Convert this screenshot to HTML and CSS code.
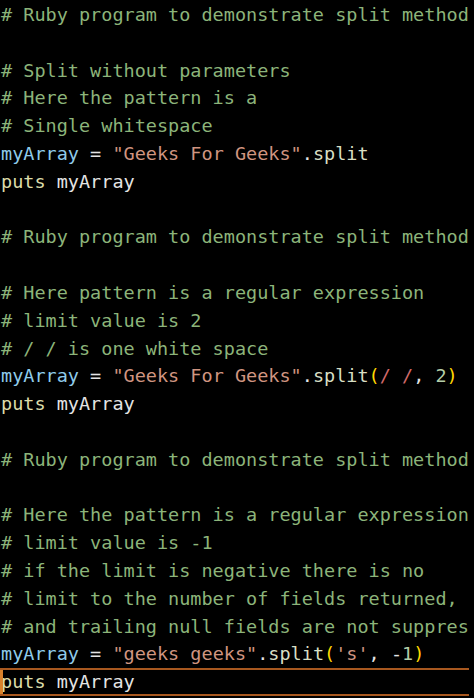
FILE: index.html
```html
<!DOCTYPE html>
<html>
<head>
<meta charset="utf-8">
<link rel="stylesheet" href="styles.css">
</head>
<body>
<div class="editor">
<div class="line"><span class="c"># Ruby program to demonstrate split method</span></div>
<div class="line"> </div>
<div class="line"><span class="c"># Split without parameters</span></div>
<div class="line"><span class="c"># Here the pattern is a</span></div>
<div class="line"><span class="c"># Single whitespace</span></div>
<div class="line"><span class="v">myArray</span><span class="p"> = </span><span class="s">"Geeks For Geeks"</span><span class="p">.</span><span class="f">split</span></div>
<div class="line"><span class="k">puts</span><span class="p"> myArray</span></div>
<div class="line"> </div>
<div class="line"><span class="c"># Ruby program to demonstrate split method</span></div>
<div class="line"> </div>
<div class="line"><span class="c"># Here pattern is a regular expression</span></div>
<div class="line"><span class="c"># limit value is 2</span></div>
<div class="line"><span class="c"># / / is one white space</span></div>
<div class="line"><span class="v">myArray</span><span class="p"> = </span><span class="s">"Geeks For Geeks"</span><span class="p">.</span><span class="f">split</span><span class="b">(</span><span class="r">/ /</span><span class="p">, </span><span class="n">2</span><span class="b">)</span></div>
<div class="line"><span class="k">puts</span><span class="p"> myArray</span></div>
<div class="line"> </div>
<div class="line"><span class="c"># Ruby program to demonstrate split method</span></div>
<div class="line"> </div>
<div class="line"><span class="c"># Here the pattern is a regular expression</span></div>
<div class="line"><span class="c"># limit value is -1</span></div>
<div class="line"><span class="c"># if the limit is negative there is no</span></div>
<div class="line"><span class="c"># limit to the number of fields returned,</span></div>
<div class="line"><span class="c"># and trailing null fields are not suppres</span></div>
<div class="line"><span class="v">myArray</span><span class="p"> = </span><span class="s">"geeks geeks"</span><span class="p">.</span><span class="f">split</span><span class="b">(</span><span class="s">'s'</span><span class="p">, </span><span class="p">-</span><span class="n">1</span><span class="b">)</span></div>
<div class="line current"><span class="cursor"></span><span class="k">puts</span><span class="p"> myArray</span></div>
</div>
</body>
</html>
```
FILE: styles.css
```css
html, body {
  margin: 0;
  padding: 0;
  background: #000;
}
.editor {
  padding-top: 1px;
  font-family: "DejaVu Sans Mono", monospace;
  font-size: 18.5px;
  color: #d4d4d4;
  width: 474px;
  overflow: hidden;
}
.line {
  position: relative;
  height: 27.8px;
  line-height: 27.8px;
  white-space: pre;
  overflow: hidden;
  padding-left: 1px;
  box-sizing: border-box;
}
.current {
  height: 27.5px;
  border-top: 2px solid #a8581f;
  border-bottom: 2px solid #a8581f;
  line-height: 23.5px;
  width: 469px;
}
.cursor {
  position: absolute;
  left: 0;
  top: 0;
  width: 3px;
  height: 100%;
  background: #d9822b;
}
.c { color: #8cb47a; }
.v { color: #8fcbea; }
.s { color: #d09580; }
.k { color: #dcdcaa; }
.f { color: #d8dfc4; }
.p { color: #e4e4e4; }
.b { color: #ffd700; }
.r { color: #d16969; }
.n { color: #b5cea8; }
```
